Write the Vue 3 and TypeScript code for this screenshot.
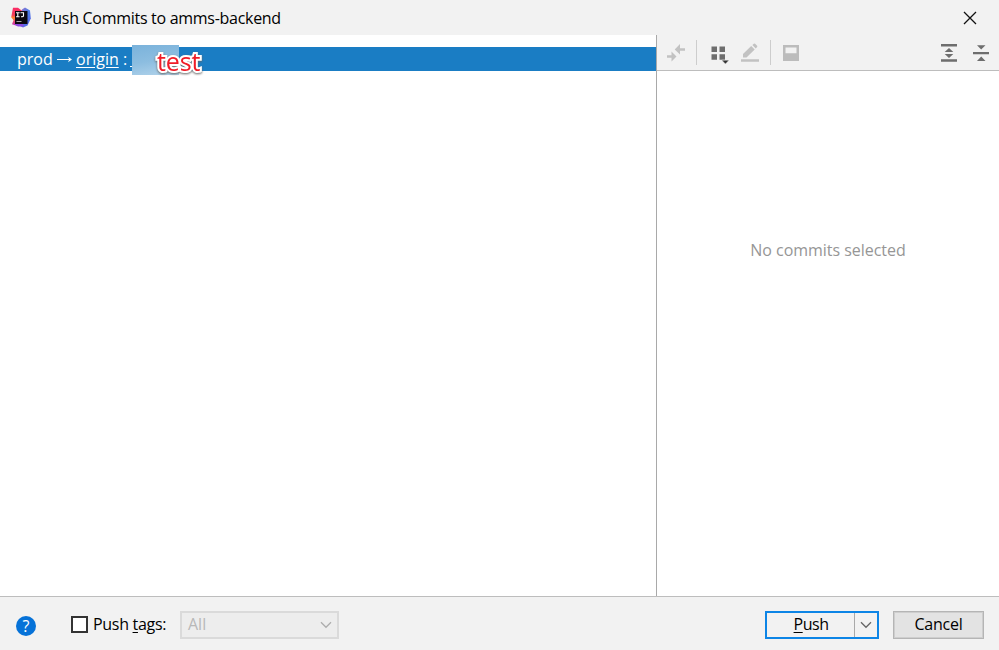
<script setup lang="ts">
import { ref } from 'vue'

const project = ref('amms-backend')
const branch = ref('prod')
const remote = ref('origin')
const target = ref('test')
const pushTags = ref(false)
const tagMode = ref('All')
</script>

<template>
  <div class="dialog">
    <header class="titlebar">
      <svg class="logo" width="22" height="22" viewBox="0 0 22 22">
        <defs>
          <linearGradient id="lg-blue" x1="0" y1="0" x2="1" y2="1">
            <stop offset="0" stop-color="#c06ab8" />
            <stop offset=".5" stop-color="#4a80ea" />
            <stop offset="1" stop-color="#5a58e0" />
          </linearGradient>
          <linearGradient id="lg-pink" x1="0" y1="0" x2="0" y2="1">
            <stop offset="0" stop-color="#fb2a66" />
            <stop offset=".4" stop-color="#f2415a" />
            <stop offset=".55" stop-color="#ff8a2a" />
            <stop offset=".7" stop-color="#f0506a" />
            <stop offset="1" stop-color="#b52ac8" />
          </linearGradient>
        </defs>
        <path d="M12 2.500 15 .5l5 3 .8 8-3.300 7L13 20.500l-6-3z" fill="url(#lg-blue)" />
        <path d="M3 .8h5l4 3-2 14-2 1.500-6-2 1.500-4-2.300-3z" fill="url(#lg-pink)" />
        <path d="M4 17h9l1 2.500H8z" fill="#8a4ae0" />
        <rect x="5" y="4" width="12.500" height="13" fill="#0b0810" />
        <path d="M6 5.800h3.600M7.800 6v3.700M6 9.700h3.600M10.500 5.800h3v3q0 1-1.500 1h-1" fill="none" stroke="#fff" stroke-width="1.100" />
        <path d="M6.500 14.500h5" stroke="#aaa" stroke-width="1" />
      </svg>
      <h1 class="title">Push Commits to {{ project }}</h1>
      <svg class="close" width="14" height="14" viewBox="0 0 14 14">
        <path d="M1 1l12 12M13 1 1 13" stroke="#111" stroke-width="1.300" />
      </svg>
    </header>

    <main class="content">
      <section class="repos">
        <div class="row">
          <span class="branch">{{ branch }}</span>
          <svg class="arrow" width="16" height="9" viewBox="0 0 16 9">
            <path d="M0 4.500h14" fill="none" stroke="#fff" stroke-width="1" />
            <path d="M11 1.700 15 4.500l-4 2.800 1.200-2.800z" fill="#fff" />
          </svg>
          <span class="remote">{{ remote }}</span>
          <span class="colon">:</span>
          <span class="stub"></span>
          <span class="mask"></span>
          <span class="target">{{ target }}</span>
        </div>
      </section>

      <section class="details">
        <div class="toolbar">
          <svg class="tools" width="146" height="35" viewBox="0 0 146 35">
            <path d="M10 21.500h6M21 14.500h7" fill="none" stroke="#c2c2c2" stroke-width="2.500" />
            <path d="M14.500 16.500v10l5-5zM23 9v10.500l-5.300-5z" fill="#c2c2c2" />
            <path d="M39.500 5v25M113.500 5v25" stroke="#cdcdcd" />
            <path d="M54.500 11.500h5.500v5.500h-5.500zM62.500 11.500h5.500v5.500h-5.500zM54.500 19.300h5.500v5.500h-5.500zM62.500 19.300h5.500v5.500h-5.500z" fill="#6e6e6e" />
            <path d="M64.800 25.200h7.200l-3.600 3.800z" fill="#333" stroke="#f2f2f2" stroke-width=".4" />
            <path d="M86 22.500v-3.600l8.200-7.900 3.500 3.500-8.200 8zM95.400 10l1.500-1.300q.6-.5 1.200 0l2 2q.5.600 0 1.200l-1.400 1.500z" fill="#c2c2c2" />
            <path d="M84 25.500h18" stroke="#c2c2c2" stroke-width="2.500" />
            <path d="M126 10h16v16h-16zM128.500 12.500v5.800h11v-5.800z" fill="#bcbcbc" fill-rule="evenodd" />
          </svg>
          <svg class="tools" width="58" height="35" viewBox="0 0 58 35">
            <g fill="#6e6e6e">
              <path d="M0 9h16v2.500H0zM0 24.200h16v2.500H0zM3.700 17 8 13l4.300 4zM3.700 19h8.600L8 23z" />
              <path d="M32 17h16v2.300H32zM36 10.200h8.500L40.200 14.500zM36 26l4.200-4.500 4.300 4.500z" />
            </g>
          </svg>
        </div>
        <div class="empty"><span>No commits selected</span></div>
      </section>
    </main>

    <footer class="footer">
      <button class="help" type="button"><span>?</span></button>
      <label class="check">
        <input v-model="pushTags" type="checkbox">
        <span class="text">Push <u>t</u>ags:</span>
      </label>
      <div class="select">
        <span class="text">{{ tagMode }}</span>
        <svg width="12" height="8" viewBox="0 0 12 8">
          <path d="M1 1.200 6 6.300l5-5.100" fill="none" stroke="#adadad" stroke-width="1.300" />
        </svg>
      </div>
      <div class="push">
        <button class="push-main" type="button"><span class="text"><u>P</u>ush</span></button>
        <button class="push-more" type="button">
          <svg width="12" height="8" viewBox="0 0 12 8">
            <path d="M1 1.200 6 6.300l5-5.100" fill="none" stroke="#666" stroke-width="1.300" />
          </svg>
        </button>
      </div>
      <button class="cancel" type="button"><span class="text">Cancel</span></button>
    </footer>
  </div>
</template>

<style>
body {
  margin: 0;
  overflow: hidden;
}
</style>

<style scoped>
.dialog {
  display: flex;
  flex-direction: column;
  width: 999px;
  height: 650px;
  background: #f2f2f2;
  color: #000;
  font: 16px/22px "Open Sans", "Noto Sans", sans-serif;
  white-space: nowrap;
}
button {
  display: flex;
  align-items: center;
  justify-content: center;
  box-sizing: border-box;
  margin: 0;
  padding: 0;
  border: 0;
  font: inherit;
  color: inherit;
}
.titlebar {
  display: flex;
  align-items: center;
  flex: none;
  box-sizing: border-box;
  height: 35px;
  padding: 0 22px 0 10px;
}
.title {
  margin: 1px auto 0 11px;
  font-size: 16px;
  font-weight: 400;
  letter-spacing: -0.29px;
}
.close {
  margin-top: 1px;
}
.content {
  display: flex;
  flex: 1;
  min-height: 0;
}
.repos {
  width: 656px;
  padding-top: 12px;
  background: #fff;
}
.row {
  position: relative;
  display: flex;
  align-items: center;
  height: 24px;
  box-sizing: border-box;
  padding: 0 0 0 17px;
  background: #1a7dc4;
  color: #fff;
}
.branch {
  width: 36px;
}
.arrow {
  margin: 0 3px 0 4px;
}
.remote {
  width: 43px;
  letter-spacing: 0;
  text-decoration: underline;
  text-underline-offset: 2px;
}
.colon {
  margin-left: 4px;
}
.stub {
  position: absolute;
  left: 130px;
  top: 19px;
  width: 3px;
  height: 1px;
  background: #fff;
}
.mask {
  position: absolute;
  left: 132px;
  top: -2px;
  width: 47px;
  height: 30px;
  background: linear-gradient(170deg, #7ab2db, #8cbde0 50%, #b3d4eb);
}
.target {
  position: absolute;
  left: 157px;
  top: 0;
  font-size: 25px;
  line-height: 28px;
  letter-spacing: -0.1px;
  color: #f01c28;
  -webkit-text-stroke: 4px #fff;
  paint-order: stroke fill;
  filter: drop-shadow(0 1px 1px #666);
}
.details {
  display: flex;
  flex: 1;
  flex-direction: column;
  border-left: 1px solid #a9a9a9;
  background: #fff;
}
.toolbar {
  display: flex;
  justify-content: space-between;
  height: 35px;
  background: #f2f2f2;
  border-bottom: 1px solid #bdbdbd;
}
.tools {
  display: block;
}
.empty {
  padding-top: 168px;
  text-align: center;
  letter-spacing: -0.04px;
  color: #969696;
}
.footer {
  display: flex;
  align-items: center;
  flex: none;
  box-sizing: border-box;
  height: 54px;
  padding: 2px 15px 0 16px;
  border-top: 1px solid #bdbdbd;
}
.text {
  padding-bottom: 1px;
}
.help {
  width: 20px;
  height: 20px;
  margin-top: 3px;
  border-radius: 50%;
  background: #0672d8;
  color: #fff;
}
.check {
  display: flex;
  align-items: center;
  width: 110px;
  margin-left: 35px;
}
.check .text {
  letter-spacing: -0.3px;
}
.check input {
  appearance: none;
  flex: none;
  width: 17px;
  height: 17px;
  box-sizing: border-box;
  margin: 0 5px 0 0;
  border: 2px solid #333;
  background: #fff;
}
u {
  text-underline-offset: 2px;
}
.select {
  display: flex;
  align-items: center;
  justify-content: space-between;
  box-sizing: border-box;
  width: 159px;
  height: 28px;
  margin-left: -1px;
  padding: 0 5px 0 6px;
  border: 2px solid #dadada;
  background: #ededed;
  color: #b8b8b8;
}
.push {
  display: flex;
  box-sizing: border-box;
  width: 114px;
  height: 28px;
  margin-left: auto;
  border: 2px solid #0d85e6;
}
.push-main {
  flex: 1;
  padding-left: 1px;
  letter-spacing: -0.5px;
  background: #f2f2f2;
}
.push-more {
  width: 23px;
  border-left: 1px solid #a9a9a9;
  background: #f2f2f2;
}
.cancel {
  width: 91px;
  height: 28px;
  margin-left: 14px;
  letter-spacing: -0.25px;
  border: 1px solid #b5b5b5;
  outline: 1px solid #cecece;
  outline-offset: -2px;
  background: #e3e3e3;
}
</style>
